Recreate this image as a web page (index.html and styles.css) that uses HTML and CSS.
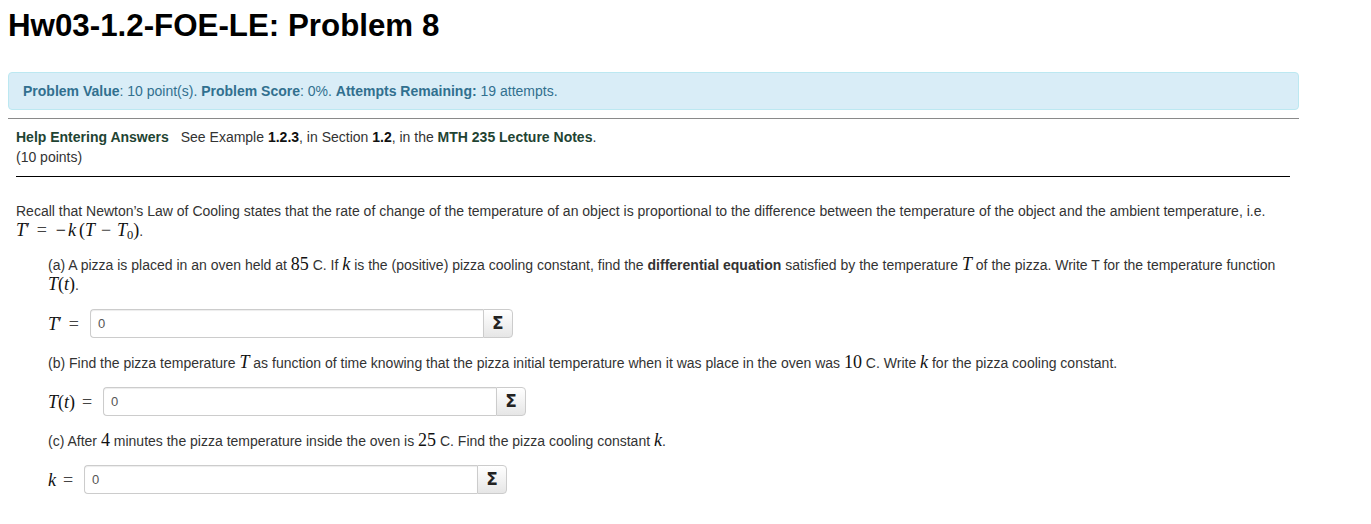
FILE: index.html
```html
<!DOCTYPE html>
<html>
<head>
<meta charset="utf-8">
<link rel="stylesheet" href="styles.css">
</head>
<body>
<div class="page">
  <h1 class="title">Hw03-1.2-FOE-LE: Problem 8</h1>
  <div class="alert">
    <b>Problem Value</b>: 10 point(s). <b>Problem Score</b>: 0%. <b>Attempts Remaining:</b> 19 attempts.
  </div>
  <div class="rule-gray"></div>
  <div class="problem">
    <div class="help">
      <div><span class="link">Help Entering Answers</span><span class="gap"></span>See Example <b>1.2.3</b>, in Section <b>1.2</b>, in the <span class="link">MTH 235 Lecture Notes</span>.</div>
      <div>(10 points)</div>
    </div>
    <div class="body">
      <p class="para">Recall that Newton’s Law of Cooling states that the rate of change of the temperature of an object is proportional to the difference between the temperature of the object and the ambient temperature, i.e.<br><span class="m"><i>T</i>′<span class="rel">=</span><span class="un">−</span><i>k</i><span class="thin"></span>(<i>T</i><span class="bin">−</span><i>T</i><sub>0</sub>)</span>.</p>
      <div class="part">
        <p class="para">(a) A pizza is placed in an oven held at <span class="m">85</span> C. If <span class="m"><i>k</i></span> is the (positive) pizza cooling constant, find the <b>differential equation</b> satisfied by the temperature <span class="m"><i>T</i></span> of the pizza. Write T for the temperature function<br><span class="m"><i>T</i>(<i>t</i>)</span>.</p>
        <div class="answer">
          <span class="m lbl"><i>T</i>′<span class="rel">=</span></span>
          <div class="group"><div class="field">0</div><div class="btn">Σ</div></div>
        </div>
        <p class="para">(b) Find the pizza temperature <span class="m"><i>T</i></span> as function of time knowing that the pizza initial temperature when it was place in the oven was <span class="m">10</span> C. Write <span class="m"><i>k</i></span> for the pizza cooling constant.</p>
        <div class="answer">
          <span class="m lbl"><i>T</i>(<i>t</i>)<span class="rel">=</span></span>
          <div class="group"><div class="field">0</div><div class="btn">Σ</div></div>
        </div>
        <p class="para">(c) After <span class="m">4</span> minutes the pizza temperature inside the oven is <span class="m">25</span> C. Find the pizza cooling constant <span class="m"><i>k</i></span>.</p>
        <div class="answer">
          <span class="m lbl"><i>k</i><span class="rel">=</span></span>
          <div class="group"><div class="field">0</div><div class="btn">Σ</div></div>
        </div>
      </div>
    </div>
  </div>
</div>
</body>
</html>
```

FILE: styles.css
```css
body {
  margin: 8px;
  font-family: "Liberation Sans", Arial, sans-serif;
  color: #333;
  font-size: 14px;
  background: #fff;
}
.page {
  width: 1291px;
}
.title {
  margin: 0;
  font-size: 31.3px;
  line-height: 36px;
  font-weight: bold;
  color: #000;
}
.alert {
  margin-top: 28px;
  background: #d9edf7;
  border: 1px solid #bce8f1;
  border-radius: 4px;
  color: #31708f;
  padding: 8px 14px;
  line-height: 20px;
  font-size: 14px;
}
.rule-gray {
  margin-top: 8px;
  margin-left: -2px;
  height: 1px;
  background: #8a8a8a;
}
.problem {
  padding: 0 9px 0 8px;
}
.help {
  padding: 8px 0 9px;
  line-height: 20px;
  border-bottom: 1px solid #000;
  color: #333;
}
.help b { color: #111; }
.link {
  color: #1f4433;
  font-weight: bold;
}
.gap {
  display: inline-block;
  width: 12px;
}
.body {
  padding-top: 24px;
}
.para {
  margin: 0 0 14px;
  line-height: 20px;
}
.part {
  margin-left: 32px;
}
.m {
  font-family: "Liberation Serif", "Times New Roman", serif;
  font-size: 18px;
  line-height: 0;
  color: #111;
}
.m i { font-style: italic; }
.m sub { font-size: 12.5px; vertical-align: -3px; line-height: 0; }
.rel {
  display: inline-block;
  width: 1.33em;
  text-align: center;
  color: #444;
}
.bin {
  display: inline-block;
  width: 1.22em;
  text-align: center;
  color: #444;
}
.un {
  display: inline-block;
  width: 0.78em;
  text-align: center;
}
.thin {
  display: inline-block;
  width: 0.17em;
}
.answer {
  display: flex;
  align-items: center;
  margin-bottom: 15px;
  height: 29px;
}
.lbl {
  line-height: 20px;
  margin-right: 4px;
}
.group {
  display: flex;
  height: 29px;
  width: 423px;
  box-sizing: border-box;
}
.field {
  flex: 1;
  border: 1px solid #ccc;
  border-right: none;
  border-radius: 4px 0 0 4px;
  padding: 0 7px;
  line-height: 27px;
  color: #555;
  font-size: 13px;
  box-shadow: inset 0 1px 1px rgba(0,0,0,0.075);
}
.btn {
  width: 30px;
  box-sizing: border-box;
  border: 1px solid #ccc;
  border-radius: 0 4px 4px 0;
  background: linear-gradient(#fff, #e6e6e6);
  text-align: center;
  line-height: 27px;
  font-weight: bold;
  font-size: 17px;
  color: #222;
  font-family: "DejaVu Sans", sans-serif;
}
```
